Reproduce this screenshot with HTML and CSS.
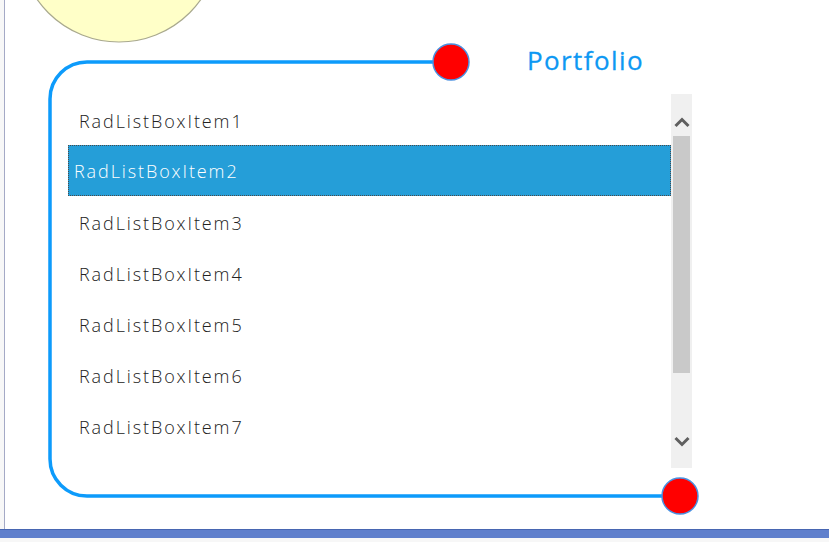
FILE: index.html
```html
<!DOCTYPE html>
<html>
<head>
<meta charset="utf-8">
<link rel="stylesheet" href="styles.css">
</head>
<body>
<div class="window">
  <div class="canvas">
    <svg class="deco" width="829" height="529" viewBox="0 0 829 529">
      <circle cx="119" cy="-58" r="100" fill="#ffffc8" stroke="#a9a98e" stroke-width="1.2"/>
      <path d="M 451 62 H 87 A 37 37 0 0 0 50 99 V 459 A 37 37 0 0 0 87 496 H 680" fill="none" stroke="#0d9bfb" stroke-width="3.5"/>
      <circle cx="451" cy="62" r="18" fill="#ff0000" stroke="#4a90e0" stroke-width="1.5"/>
      <circle cx="680" cy="496" r="18" fill="#ff0000" stroke="#4a90e0" stroke-width="1.5"/>
    </svg>
    <div class="title">Portfolio</div>
    <div class="listbox">
      <div class="items">
        <div class="item">RadListBoxItem1</div>
        <div class="item selected">RadListBoxItem2</div>
        <div class="item">RadListBoxItem3</div>
        <div class="item">RadListBoxItem4</div>
        <div class="item">RadListBoxItem5</div>
        <div class="item">RadListBoxItem6</div>
        <div class="item">RadListBoxItem7</div>
      </div>
      <div class="scrollbar">
        <svg class="arrow" width="16" height="12" viewBox="0 0 16 12"><polyline points="1.5,10 8,3.5 14.5,10" fill="none" stroke="#5f5f5f" stroke-width="3"/></svg>
        <div class="track"><div class="thumb"></div></div>
        <svg class="arrow" width="16" height="12" viewBox="0 0 16 12"><polyline points="1.5,2 8,8.5 14.5,2" fill="none" stroke="#5f5f5f" stroke-width="3"/></svg>
      </div>
    </div>
  </div>
  <div class="statusbar"></div>
</div>
</body>
</html>
```
FILE: styles.css
```css
html, body {
  margin: 0;
  padding: 0;
  background: #ffffff;
}
.window {
  width: 829px;
  height: 542px;
  display: flex;
  flex-direction: column;
  background: #f7f7f7;
}
.canvas {
  position: relative;
  height: 529px;
  margin-left: 4px;
  border-left: 1px solid #a4a9c6;
  background: #ffffff;
  box-sizing: border-box;
  display: flex;
  flex-direction: column;
}
.deco {
  position: absolute;
  left: -5px;
  top: 0;
  pointer-events: none;
}
.title {
  position: relative;
  margin: 42px 0 0 522px;
  height: 37px;
  font-family: "Open Sans", "Noto Sans", sans-serif;
  font-weight: 500;
  font-size: 26px;
  line-height: 37px;
  color: #0d98f3;
  letter-spacing: 1.4px;
  -webkit-text-stroke: 0.3px #0d98f3;
}
.listbox {
  position: relative;
  margin: 15px 0 0 63px;
  width: 624px;
  height: 374px;
  display: flex;
  background: #ffffff;
}
.items {
  flex: 1;
  display: flex;
  flex-direction: column;
}
.item {
  height: 51px;
  padding-top: 4px;
  line-height: 47px;
  padding-left: 11px;
  font-family: "Open Sans", "Noto Sans", sans-serif;
  font-weight: 300;
  font-size: 18px;
  letter-spacing: 1.9px;
  color: #222222;
  box-sizing: border-box;
}
.item.selected {
  background: #259ed8;
  color: #ffffff;
  padding-left: 5px;
  padding-top: 2px;
  border: 1px dotted #4a4a4a;
  line-height: 47px;
}
.scrollbar {
  width: 21px;
  background: #f0f0f0;
  display: flex;
  flex-direction: column;
  align-items: center;
}
.arrow {
  display: block;
  margin: 22px 0 8px;
}
.scrollbar .arrow:last-child {
  margin: 6px 0 20px;
}
.track {
  flex: 1;
  width: 100%;
  display: flex;
  flex-direction: column;
  align-items: center;
}
.thumb {
  width: 17px;
  height: 237px;
  background: #c9c9c9;
}
.statusbar {
  height: 8px;
  background: #5f7fcc;
  border-top: 1px solid #4766b2;
}
```
